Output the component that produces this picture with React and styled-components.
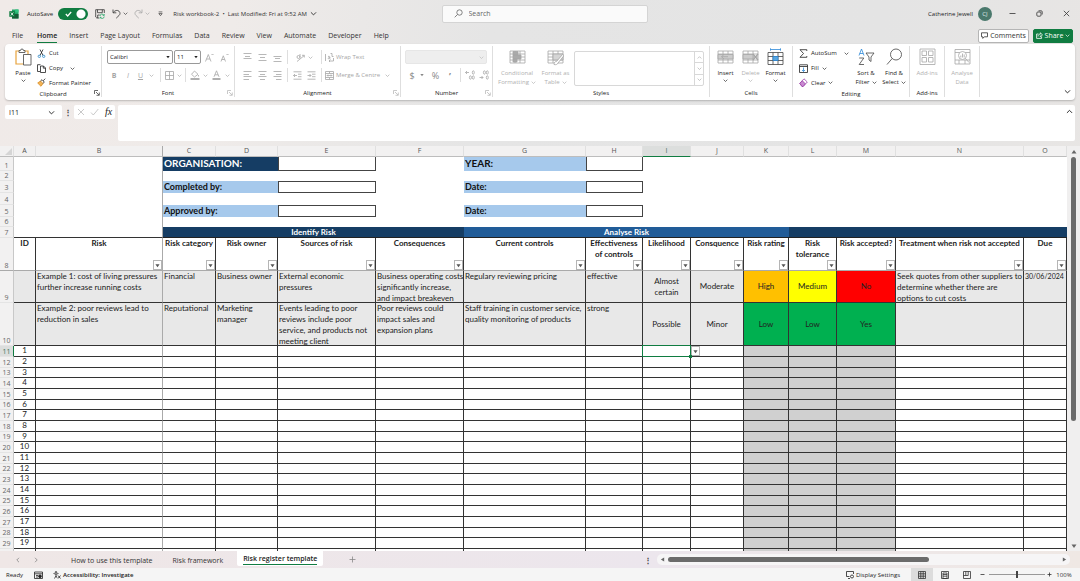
import styled, { createGlobalStyle, css } from "styled-components";

const GlobalStyle = createGlobalStyle`
  * {
    box-sizing: border-box;
  }

  body {
    margin: 0;
    font-family: "Open Sans", "Noto Sans", sans-serif;
    font-size: 6px;
    color: #222;
    overflow: hidden;
  }

  button, input, select {
    font: inherit;
    color: inherit;
    margin: 0;
    padding: 0;
    border: 0;
    background: none;
    outline: none;
  }
`;

const Window = styled.div`
  display: flex;
  flex-direction: column;
  height: 100vh;
  background: linear-gradient(100deg, #f0eae8 0%, #efebe9 20%, #e5e5e5 42%, #e4e4e4 75%, #e9e6e4 100%);
`;

const Icon = styled.svg`
  display: block;
  flex: none;
  fill: none;
  stroke: currentColor;
  stroke-width: 0.8;
`;

/* Title bar */

const TitleBar = styled.header`
  display: grid;
  grid-template-columns: 1fr 206px 1fr;
  align-items: center;
  height: 27px;
  padding-left: 9px;
`;

const TitleLeft = styled.div`
  display: flex;
  align-items: center;
  white-space: nowrap;
`;

const AutoSave = styled.label`
  display: flex;
  align-items: center;
  gap: 5px;
  margin: 0 7px 0 8px;
`;

const Toggle = styled.input`
  appearance: none;
  width: 30px;
  height: 12px;
  border-radius: 6px;
  background: radial-gradient(circle at 23px 6px, #fff 4px, transparent 5px), #107c41;
`;

const ToggleWrap = styled.span`
  position: relative;
  display: flex;

  svg {
    position: absolute;
    left: 7px;
    top: 3px;
    color: #fff;
  }
`;

const PlainButton = styled.button`
  display: flex;
  align-items: center;
  justify-content: center;
  gap: ${(p) => p.$gap || 0}px;
  width: ${(p) => (p.$w ? `${p.$w}px` : "auto")};
  height: 14px;
  flex: none;
  white-space: nowrap;
  color: ${(p) => (p.$dim ? "#a6a6a6" : "#333")};
`;

const DocTitle = styled(PlainButton)`
  margin-left: 3px;
`;

const SearchBox = styled.label`
  display: flex;
  align-items: center;
  gap: 6px;
  height: 18px;
  padding-left: 11px;
  border: 1px solid #d4d4d4;
  border-radius: 2px;
  background: #fafafa;
  color: #666;
`;

const SearchInput = styled.input`
  width: 100%;
  font-size: 7px;

  &::placeholder {
    color: #666;
    opacity: 1;
  }
`;

const TitleRight = styled.div`
  display: flex;
  align-items: center;
  justify-content: flex-end;
`;

const Avatar = styled.span`
  display: flex;
  align-items: center;
  justify-content: center;
  width: 14px;
  height: 14px;
  margin: 0 7px 0 5px;
  border-radius: 50%;
  background: #4a786c;
  color: #dfe9e6;
`;

/* Ribbon tabs */

const MenuBar = styled.nav`
  display: flex;
  align-items: center;
  height: 17px;
  padding: 0 7px 0 6px;
  font-size: 7px;
`;

const MenuTab = styled.button`
  height: 15px;
  margin: 0 6px;
  color: #333;
  white-space: nowrap;
  border-bottom: 1px solid transparent;

  &:first-child {
    margin-right: 8px;
  }

  ${(p) =>
    p.$active &&
    css`
      font-weight: 600;
      color: #222;
      border-color: #107c41;
    `}
`;

const MenuAction = styled.button`
  display: flex;
  align-items: center;
  justify-content: center;
  gap: 2px;
  width: ${(p) => p.$w}px;
  height: 14px;
  margin-left: ${(p) => (p.$primary ? 4 : 0)}px;
  border: 1px solid ${(p) => (p.$primary ? "#107c41" : "#b5b5b5")};
  border-radius: 2px;
  background: ${(p) => (p.$primary ? "#107c41" : "#fff")};
  color: ${(p) => (p.$primary ? "#fff" : "#333")};
`;

const Spacer = styled.span`
  flex: 1;
`;

/* Ribbon */

const Ribbon = styled.section`
  display: flex;
  flex: none;
  height: 56px;
  margin: 0 5px;
  border-radius: 4px;
  background: #fff;
  box-shadow: 0 1px 2px rgba(0, 0, 0, 0.22);
`;

const RibbonGroup = styled.div`
  position: relative;
  display: flex;
  flex-direction: column;
  flex: 0 0 ${(p) => p.$w}px;
  height: 51px;
  margin-top: 2px;
  border-right: 1px solid #dedede;
`;

const GroupBody = styled.div`
  display: flex;
  height: 44px;
  padding-left: ${(p) => p.$pad || 0}px;
`;

const GroupLabel = styled.div`
  line-height: 8px;
  text-align: center;
  color: #222;
`;

const Launcher = styled.button`
  position: absolute;
  right: 1px;
  bottom: 1px;
  color: ${(p) => (p.$dim ? "#bbb" : "#444")};
`;

const Stack = styled.div`
  display: flex;
  flex-direction: column;
`;

const ToolRow = styled.div`
  display: flex;
  align-items: center;
  height: ${(p) => p.$h || 18}px;
  white-space: nowrap;
`;

const Rule = styled.span`
  width: 1px;
  height: 14px;
  margin: 0 3px;
  background: #dedede;
`;

const BigButton = styled.button`
  display: flex;
  flex-direction: column;
  align-items: center;
  width: ${(p) => p.$w}px;
  height: 42px;
  padding-top: 2px;
  line-height: 9px;
  color: ${(p) => (p.$dim ? "#b0b0b0" : "#222")};

  & > svg:first-child {
    margin-bottom: 3px;
    color: ${(p) => (p.$dim || p.$soft ? "#a6a6a6" : "#444")};
  }
`;

const WithArrow = styled.span`
  display: flex;
  align-items: center;
  gap: 2px;
`;

const SmallButton = styled.button`
  display: flex;
  align-items: center;
  gap: 3px;
  height: 15px;
  color: #222;
  white-space: nowrap;
`;

const SplitArrow = styled.span`
  margin-left: 4px;
`;

const Picker = styled.span`
  display: flex;
  align-items: center;
  width: ${(p) => p.$w}px;
  height: 14px;
  padding: 0 2px;
  margin-right: 1px;
  border: 1px solid ${(p) => (p.$dim ? "#e6e6e6" : "#999")};
  border-radius: 2px;
  background: ${(p) => (p.$dim ? "#eee" : "#fff")};
  color: ${(p) => (p.$dim ? "#bbb" : "#222")};

  select {
    appearance: none;
    flex: 1;
    min-width: 0;
  }
`;

const Gallery = styled.div`
  display: flex;
  width: 130px;
  height: 35px;
  margin-top: 5px;
  border: 1px solid #d8d8d8;
  border-radius: 2px;
`;

const GalleryScroll = styled.div`
  display: flex;
  flex-direction: column;
  width: 9px;
  margin-left: auto;
  border-left: 1px solid #d8d8d8;

  button {
    display: flex;
    flex: 1;
    align-items: center;
    justify-content: center;
    color: #aaa;
  }

  button + button {
    border-top: 1px solid #d8d8d8;
  }
`;

const Collapse = styled.button`
  align-self: flex-end;
  margin: 0 4px 5px auto;
`;

/* Formula bar */

const FormulaBar = styled.div`
  display: flex;
  flex: none;
  height: 36px;
  margin: 5px 5px;
`;

const NameBox = styled.label`
  display: flex;
  align-items: center;
  width: 57px;
  height: 14px;
  padding: 0 7px 0 4px;
  border-radius: 2px;
  background: #fff;

  input {
    flex: 1;
    min-width: 0;
    font-size: 7px;
  }
`;

const Dots = styled.span`
  width: 12px;
  font-size: 8px;
  font-weight: 700;
  line-height: 14px;
  text-align: center;
  color: #444;
`;

const FxBox = styled.div`
  display: flex;
  align-items: center;
  justify-content: space-around;
  width: 41px;
  height: 14px;
  margin-right: 3px;
  border-radius: 2px;
  background: #fff;
  color: #bbb;
`;

const Fx = styled.button`
  font-family: "Liberation Serif", serif;
  font-size: 10px;
  font-style: italic;
  line-height: 12px;
  color: #222;
`;

const FormulaField = styled.div`
  display: flex;
  flex: 1;
  align-items: flex-start;
  padding: 3px 2px;
  border-radius: 2px;
  background: #fff;

  input {
    flex: 1;
  }
`;

/* Sheet */

const SheetArea = styled.main`
  display: flex;
  flex: 1;
  min-height: 0;
  overflow: hidden;
  background: #f0efef;
`;

const SheetView = styled.div`
  flex: 1;
  min-width: 0;
  overflow: hidden;
  background: #fff;
`;

const Sheet = styled.table`
  width: 100%;
  table-layout: fixed;
  border-collapse: separate;
  border-spacing: 0;
  font-family: Lato, "Liberation Sans", sans-serif;
  font-size: 8px;
  line-height: 11px;
  color: #222;
`;

const ColHead = styled.th`
  height: 11px;
  padding: 0;
  border-right: 1px solid ${(p) => (p.$freeze ? "#aaa" : "#e0e0e0")};
  border-bottom: 1px solid ${(p) => (p.$selected ? "#107c41" : "#bdbdbd")};
  background: ${(p) => (p.$selected ? "#dcdedd" : "#f2f1f1")};
  color: ${(p) => (p.$selected ? "#3d7358" : "#555")};
  font-family: "Open Sans", sans-serif;
  font-size: 7px;
  font-weight: 400;
  line-height: 10px;
`;

const RowHead = styled.th`
  padding: 0;
  border-right: 1px solid ${(p) => (p.$selected ? "#107c41" : "#c8c8c8")};
  border-bottom: 1px solid ${(p) => (p.$freeze ? "#aaa" : "#e4e4e4")};
  background: ${(p) => (p.$selected ? "#dcdedd" : "#f2f1f1")};
  color: ${(p) => (p.$selected ? "#3d7358" : "#666")};
  font-family: "Open Sans", sans-serif;
  font-size: 7px;
  font-weight: 400;
  line-height: 9px;
  vertical-align: bottom;
`;

const Row = styled.tr`
  height: ${(p) => p.$h}px;
`;

const Blank = styled.td`
  padding: 0;
  line-height: 0;
  border-right: ${(p) => (p.$freeze ? "1px solid #aaa" : "0")};
  border-bottom: ${(p) => (p.$ruled ? "1px solid #333" : "0")};
`;

const TitleCell = styled.td`
  padding: 0 1px;
  background: ${(p) => (p.$navy ? "#153d64" : "#a6c9ec")};
  color: ${(p) => (p.$navy ? "#fff" : "#111")};
  font-size: ${(p) => (p.$large ? 10 : 9)}px;
  font-weight: 700;
  line-height: 12px;
  white-space: nowrap;

  label {
    display: block;
    height: ${(p) => (p.$large ? 14 : 12)}px;
  }
`;

const EntryCell = styled.td`
  padding: 0;
  line-height: 0;

  input {
    display: block;
    width: 100%;
    height: ${(p) => p.$h}px;
    border: 1px solid #444;
    border-top-width: ${(p) => (p.$open ? 0 : 1)}px;
    font-size: 8px;
  }
`;

const Band = styled.th`
  padding: 0;
  background: ${(p) => (p.$blue ? "#215c98" : "#153d64")};
  color: #fff;
  font-weight: 700;
  line-height: 10px;
  border-bottom: 1px solid #222;
`;

const HeadCell = styled.th`
  position: relative;
  padding: 0;
  border-right: 1px solid ${(p) => (p.$freeze ? "#aaa" : "#333")};
  border-bottom: 1px solid #aaa;
  vertical-align: top;
  font-weight: 700;
  white-space: pre;
`;

const DropButton = styled.button`
  position: absolute;
  right: 0;
  bottom: 0;
  display: flex;
  align-items: center;
  justify-content: center;
  width: 9px;
  height: 10px;
  border: 1px solid #b5b5b5;
  background: #fff;
  color: #555;
`;

const Cell = styled.td`
  position: relative;
  padding: 0 1px;
  border-right: 1px solid ${(p) => (p.$freeze ? "#aaa" : "#333")};
  border-bottom: 1px solid #333;
  background: ${(p) => p.$bg || "#fff"};
  text-align: ${(p) => (p.$center ? "center" : "left")};
  vertical-align: ${(p) => (p.$center ? "middle" : "top")};
  white-space: pre;
`;

const CellText = styled.div`
  max-height: ${(p) => p.$max}px;
  font-size: ${(p) => (p.$date ? 7 : 8)}px;
`;

const IdCell = styled(Cell)`
  padding: 0;
  line-height: 9px;
  text-align: center;
`;

const Cursor = styled.div`
  position: absolute;
  inset: -1px;
  z-index: 1;
  border: 1px solid #107c41;

  &::after {
    content: "";
    position: absolute;
    right: -2px;
    bottom: -2px;
    width: 3px;
    height: 3px;
    background: #107c41;
  }

  button {
    right: -10px;
  }
`;

const VScroll = styled.div`
  display: flex;
  flex-direction: column;
  align-items: center;
  width: 13px;
  padding: 3px 0 2px;
  color: #666;
`;

const VThumb = styled.div`
  width: 5px;
  flex: 0 0 66%;
  margin: 2px 0 auto;
  border-radius: 3px;
  background: #6b6b6b;
`;

/* Sheet tabs */

const TabStrip = styled.div`
  display: flex;
  align-items: center;
  flex: none;
  height: 17px;
  padding: 0 10px 0 12px;
  background: linear-gradient(90deg, #efe7e6, #ece6ed 60%, #efe8e4);
  color: #777;
`;

const TabList = styled.div`
  display: flex;
  align-self: flex-start;
  margin-left: 13px;
`;

const SheetTab = styled.button`
  height: 15px;
  padding: 0 6px;
  margin: 0 4px;
  border-radius: 0 0 2px 2px;
  background: ${(p) => (p.$active ? "#fff" : "none")};
  color: ${(p) => (p.$active ? "#222" : "#333")};
  font-size: 7px;
  font-weight: ${(p) => (p.$active ? 600 : 400)};
  white-space: nowrap;

  span {
    display: block;
    padding-top: ${(p) => (p.$active ? 0 : 3)}px;
    line-height: 11px;
    border-bottom: ${(p) => (p.$active ? "1px solid #107c41" : "0")};
  }
`;

const HScroll = styled.div`
  display: flex;
  align-items: center;
  gap: 3px;
  flex: 0 0 39%;
  height: 11px;
  padding: 0 3px;
  margin-left: 3px;
  border-radius: 5px;
  background: #f6f5f6;
  color: #666;
`;

const HThumb = styled.div`
  width: 64%;
  height: 5px;
  margin-right: auto;
  border-radius: 3px;
  background: #6b6b6b;
`;

/* Status bar */

const StatusBar = styled.footer`
  display: flex;
  align-items: center;
  flex: none;
  height: 13px;
  padding: 0 4px 0 6px;
  background: #f5f5f5;
`;

const StatusItem = styled.span`
  display: flex;
  align-items: center;
  gap: 2px;
  margin-right: ${(p) => p.$after || 0}px;
  font-weight: ${(p) => (p.$strong ? 600 : 400)};
  white-space: nowrap;
`;

const ViewButton = styled(PlainButton)`
  height: 13px;
  background: ${(p) => (p.$active ? "#dcdcdc" : "none")};
`;

const ZoomSlider = styled.input`
  appearance: none;
  width: 56px;
  height: 8px;
  margin: 0 2px;
  background: linear-gradient(#999, #999) center / 100% 1px no-repeat;

  &::-webkit-slider-thumb {
    appearance: none;
    width: 2px;
    height: 7px;
    background: #444;
  }
`;

const Chevron = ({ up, big }) => (
  <Icon width={big ? 7 : 5} height={big ? 7 : 5} viewBox="0 0 6 6">
    <path d={up ? "M.8 4.2 3 2l2.2 2.2" : "M.8 2 3 4.2 5.2 2"} />
  </Icon>
);

const Triangle = ({ d, size = 5 }) => (
  <Icon width={size} height={size} viewBox="0 0 6 6">
    <path d={d} fill="currentColor" stroke="none" />
  </Icon>
);

const DOWN = "M.5 1.5h5L3 5z";

const LauncherIcon = () => (
  <Icon width="6" height="6" viewBox="0 0 6 6">
    <path d="M.5 4V.5H4M2 2l3 3M5.3 2.5v2.8H2.5" />
  </Icon>
);

const Lines = ({ rows }) => (
  <Icon width="9" height="9" viewBox="0 0 9 9">
    {rows.map(([y, a, b]) => (
      <path key={y} d={`M${a} ${y}H${b}`} />
    ))}
  </Icon>
);

const topLines = [[0.5, 0.5, 8.5], [3.5, 2, 7], [5.5, 0.5, 8.5]];
const midLines = [[1.5, 0.5, 8.5], [4.5, 2, 7], [7.5, 0.5, 8.5]];
const lowLines = [[3.5, 0.5, 8.5], [5.5, 2, 7], [8.5, 0.5, 8.5]];
const leftLines = [[0.5, 0.5, 8.5], [3.5, 0.5, 6], [5.5, 0.5, 8.5], [8.5, 0.5, 6]];
const centerLines = [[0.5, 0.5, 8.5], [3.5, 2, 7], [5.5, 0.5, 8.5], [8.5, 2, 7]];
const rightLines = [[0.5, 0.5, 8.5], [3.5, 3, 8.5], [5.5, 0.5, 8.5], [8.5, 3, 8.5]];

const Indent = ({ flip }) => (
  <Icon width="9" height="9" viewBox="0 0 9 9">
    <path d="M.5.8h8M5 3.2h3.5M5 5.7h3.5M.5 8.2h8" />
    <path d={flip ? "M.5 4.5h3.5M2.500 3 4 4.500 2.500 6" : "M4 4.500H.500M2 3 .500 4.500 2 6"} />
  </Icon>
);

const TableIcon = ({ children }) => (
  <Icon width="17" height="18" viewBox="0 0 17 15">
    <path d="M1 1.500h15v12H1zM1 4.500h15M1 7.500h15M1 10.500h15M6 1.500v12M11 1.500v12" />
    {children}
  </Icon>
);

const columns = [
  ["A", 22], ["B", 127], ["C", 53], ["D", 62], ["E", 98], ["F", 88], ["G", 122], ["H", 57],
  ["I", 48], ["J", 53], ["K", 45], ["L", 48], ["M", 59], ["N", 128], ["O", 0],
];

const headings = [
  "ID", "Risk", "Risk category", "Risk owner", "Sources of risk", "Consequences",
  "Current controls", "Effectiveness\nof controls", "Likelihood", "Consquence",
  "Risk rating", "Risk\ntolerance", "Risk accepted?", "Treatment when risk not accepted", "Due",
];

const GREY = "#e8e8e8";
const GREEN = "#00b050";

const examples = [
  {
    n: 9,
    h: 32,
    cells: [
      "", "Example 1: cost of living pressures\nfurther increase running costs", "Financial",
      "Business owner", "External economic\npressures",
      "Business operating costs\nsignificantly increase,\nand impact breakeven",
      "Regulary reviewing pricing", "effective", "Almost\ncertain", "Moderate", "High", "Medium",
      "No", "Seek quotes from other suppliers to\ndetermine whether there are\noptions to cut costs",
      "30/06/2024",
    ],
    fills: { 10: "#ffc000", 11: "#ffff00", 12: "#ff0000" },
  },
  {
    n: 10,
    h: 43,
    cells: [
      "", "Example 2: poor reviews lead to\nreduction in sales", "Reputational",
      "Marketing\nmanager",
      "Events leading to poor\nreviews include poor\nservice, and products not\nmeeting client",
      "Poor reviews could\nimpact sales and\nexpansion plans",
      "Staff training in customer service,\nquality monitoring of products", "strong", "Possible",
      "Minor", "Low", "Low", "Yes", "", "",
    ],
    fills: { 10: GREEN, 11: GREEN, 12: GREEN },
  },
];

const entryRows = Array.from({ length: 20 }, (_, i) => i + 1);

function FormRow({ n, h, left, right }) {
  const large = n === 1;
  return (
    <Row $h={h}>
      <RowHead>{n}</RowHead>
      <Blank colSpan={2} $freeze />
      <TitleCell colSpan={2} $navy={large} $large={large}>
        <label htmlFor={`left-${n}`}>{left}</label>
      </TitleCell>
      <EntryCell $h={h} $open={large}><input id={`left-${n}`} /></EntryCell>
      <Blank />
      <TitleCell $large={large}>
        <label htmlFor={`right-${n}`}>{right}</label>
      </TitleCell>
      <EntryCell $h={h} $open={large}><input id={`right-${n}`} /></EntryCell>
      <Blank colSpan={7} />
    </Row>
  );
}

function GapRow({ n, h }) {
  return (
    <Row $h={h}>
      <RowHead>{n}</RowHead>
      <Blank colSpan={2} $freeze />
      <Blank colSpan={13} />
    </Row>
  );
}

function RiskSheet() {
  return (
    <Sheet>
      <colgroup>
        <col style={{ width: 14 }} />
        {columns.map(([name, width]) => (
          <col key={name} style={width ? { width } : undefined} />
        ))}
      </colgroup>
      <thead>
        <tr>
          <ColHead>
            <Icon width="13" height="10" viewBox="0 0 13 10">
              <path d="M12 2v7H5z" fill="#d5d5d5" stroke="none" />
            </Icon>
          </ColHead>
          {columns.map(([name]) => (
            <ColHead key={name} $selected={name === "I"} $freeze={name === "B"}>{name}</ColHead>
          ))}
        </tr>
      </thead>
      <tbody>
        <FormRow n={1} h={14} left="ORGANISATION:" right="YEAR:" />
        <GapRow n={2} h={10} />
        <FormRow n={3} h={12} left="Completed by:" right="Date:" />
        <GapRow n={4} h={12} />
        <FormRow n={5} h={12} left="Approved by:" right="Date:" />
        <GapRow n={6} h={10} />
        <Row $h={11}>
          <RowHead>7</RowHead>
          <Blank colSpan={2} $freeze $ruled />
          <Band colSpan={4}>Identify Risk</Band>
          <Band colSpan={5} $blue>Analyse Risk</Band>
          <Band colSpan={4} />
        </Row>
        <Row $h={33}>
          <RowHead $freeze>8</RowHead>
          {headings.map((text, i) => (
            <HeadCell key={text} $freeze={i === 1}>
              {text}
              {i > 0 && (
                <DropButton aria-label={`Filter ${text}`}>
                  <Triangle d={DOWN} />
                </DropButton>
              )}
            </HeadCell>
          ))}
        </Row>
        {examples.map((row) => (
          <Row key={row.n} $h={row.h}>
            <RowHead>{row.n}</RowHead>
            {row.cells.map((text, i) => (
              <Cell key={i} $freeze={i === 1} $bg={row.fills[i] || GREY} $center={i > 7 && i < 13}>
                <CellText $max={row.h - 1} $date={i === 14}>{text}</CellText>
              </Cell>
            ))}
          </Row>
        ))}
        {entryRows.map((id) => (
          <Row key={id} $h={id % 3 === 0 ? 10 : 11}>
            <RowHead $selected={id === 1}>{id < 20 && id + 10}</RowHead>
            <IdCell>{id < 20 && id}</IdCell>
            {columns.slice(1).map(([name], i) => (
              <Cell key={name} $freeze={i === 0} $bg={i > 8 && i < 12 ? "#d0d0d0" : "#fff"}>
                {id === 1 && name === "I" && (
                  <Cursor>
                    <DropButton aria-label="Choose likelihood">
                      <Triangle d={DOWN} />
                    </DropButton>
                  </Cursor>
                )}
              </Cell>
            ))}
          </Row>
        ))}
      </tbody>
    </Sheet>
  );
}

function TopBar() {
  return (
    <TitleBar>
      <TitleLeft>
        <Icon width="10" height="10" viewBox="0 0 10 10">
          <path d="M3 .5h6.500v9H3z" fill="#21a366" stroke="none" />
          <path d="M6.200.5h3.300v3H6.200z" fill="#33c481" stroke="none" />
          <path d="M3 5h6.500v4.500H3z" fill="#185c37" stroke="none" />
          <path d="M.3 2.200h5.500v5.600H.3z" fill="#107c41" stroke="none" />
          <path d="m1.800 3.500 2.500 3m0-3-2.500 3" stroke="#fff" />
        </Icon>
        <AutoSave>
          AutoSave
          <ToggleWrap>
            <Toggle type="checkbox" defaultChecked />
            <Icon width="7" height="6" viewBox="0 0 7 6">
              <path d="M.8 3 2.700 5 6.200 1" strokeWidth="1.200" />
            </Icon>
          </ToggleWrap>
        </AutoSave>
        <PlainButton $w={10} aria-label="Save">
          <Icon width="10" height="10" viewBox="0 0 10 10">
            <path d="M4 9H1.800L.7 8V.7h8.600V4M2.500.7v3h4.800v-3M2.700 9V6h2" />
            <path d="M5 7a2 2 0 0 1 3.800-.8M9.200 5v1.400H7.700M9.200 7.500a2 2 0 0 1-3.800.8M5 9.700V8.300h1.400" stroke="#21a366" />
          </Icon>
        </PlainButton>
        <PlainButton $w={29} $gap={2} aria-label="Undo">
          <Icon width="9" height="10" viewBox="0 0 9 10">
            <path d="M1 .5v3.300h3.300M1.200 3.600C3 1.200 5.400.8 7 2.200c1.500 1.500 1.200 3.200 0 4.300L4.200 9.200" />
          </Icon>
          <Chevron />
        </PlainButton>
        <PlainButton $w={16} $gap={2} $dim aria-label="Redo">
          <Icon width="9" height="10" viewBox="0 0 9 10">
            <path d="M8 .5v3.300H4.700M7.800 3.600C6 1.200 3.600.8 2 2.200c-1.500 1.500-1.200 3.200 0 4.300l2.800 2.700" />
          </Icon>
          <Chevron />
        </PlainButton>
        <PlainButton $w={20} aria-label="Customise toolbar">
          <Icon width="5" height="6" viewBox="0 0 6 7">
            <path d="M.8 1h4.400M1 3h4L3 5.500z" />
          </Icon>
        </PlainButton>
        <DocTitle $gap={3}>
          Risk workbook-2 &nbsp;•&nbsp; Last Modified: Fri at 9:52 AM
          <Chevron big />
        </DocTitle>
      </TitleLeft>
      <SearchBox>
        <Icon width="9" height="9" viewBox="0 0 9 9">
          <circle cx="5.500" cy="3.500" r="2.700" />
          <path d="M3.500 5.500.7 8.300" />
        </Icon>
        <SearchInput placeholder="Search" aria-label="Search" />
      </SearchBox>
      <TitleRight>
        Catherine Jewell
        <Avatar>CJ</Avatar>
        <PlainButton $w={27} aria-label="Minimise">
          <Icon width="7" height="7" viewBox="0 0 7 7"><path d="M.5 3.500h6" /></Icon>
        </PlainButton>
        <PlainButton $w={27} aria-label="Restore">
          <Icon width="7" height="7" viewBox="0 0 7 7">
            <rect x=".8" y="2" width="4.200" height="4.200" rx="1" />
            <path d="M2.500.8h2.700a1 1 0 0 1 1 1v2.700" />
          </Icon>
        </PlainButton>
        <PlainButton $w={27} aria-label="Close">
          <Icon width="7" height="7" viewBox="0 0 7 7"><path d="m.8.8 5.400 5.400m0-5.400L.8 6.200" /></Icon>
        </PlainButton>
      </TitleRight>
    </TitleBar>
  );
}

const menuTabs = [
  "File", "Home", "Insert", "Page Layout", "Formulas", "Data",
  "Review", "View", "Automate", "Developer", "Help",
];

function Menu() {
  return (
    <MenuBar>
      {menuTabs.map((name) => (
        <MenuTab key={name} $active={name === "Home"}>{name}</MenuTab>
      ))}
      <Spacer />
      <MenuAction $w={51}>
        <Icon width="7" height="7" viewBox="0 0 7 7">
          <path d="M.5.8h6v4H3.300L1.800 6.400V4.800H.5z" />
        </Icon>
        Comments
      </MenuAction>
      <MenuAction $w={40} $primary>
        <Icon width="7" height="7" viewBox="0 0 7 7">
          <path d="M2.500 2H.6v4.400h5V4.500M2 4.500C2 3 3 2.200 4.300 2.200V.8l2.200 2.100-2.200 2V3.500" />
        </Icon>
        Share
        <Chevron />
      </MenuAction>
    </MenuBar>
  );
}

function ClipboardGroup() {
  return (
    <RibbonGroup $w={97}>
      <GroupBody $pad={4}>
        <BigButton $w={28}>
          <Icon width="17" height="18" viewBox="0 0 17 18">
            <path d="M4 3H1v13h7M10 3h3v3" stroke="#e8a33d" strokeWidth="1.200" />
            <path d="M4 4.500V2.500h1.500a1.500 1.500 0 0 1 3 0H10v2z" />
            <path d="M8.500 6.500H16v10.500H8.500z" fill="#fff" />
          </Icon>
          Paste
          <Chevron />
        </BigButton>
        <Stack>
          <SmallButton>
            <Icon width="9" height="9" viewBox="0 0 9 9">
              <path d="m3 .5 3 6M6 .5l-3 6" />
              <circle cx="2.300" cy="7.300" r="1.200" stroke="#2b88c8" />
              <circle cx="6.700" cy="7.300" r="1.200" stroke="#2b88c8" />
            </Icon>
            Cut
          </SmallButton>
          <SmallButton>
            <Icon width="9" height="9" viewBox="0 0 9 9">
              <path d="M3 7.500H.5V.7H3.500M3.500 2h3l2 2v4.500h-5zM6.300 2v2.200h2.200" />
            </Icon>
            Copy
            <SplitArrow><Chevron /></SplitArrow>
          </SmallButton>
          <SmallButton>
            <Icon width="9" height="9" viewBox="0 0 9 9">
              <path d="M3.500 3 6 5.500l-2 2.800L.7 5z" fill="#f2b457" stroke="#d98b1f" />
              <path d="M3.500 3 5 1.700 7.300 4 6 5.500M6.200 2.700 8.300.7" />
            </Icon>
            Format Painter
          </SmallButton>
        </Stack>
      </GroupBody>
      <GroupLabel>Clipboard</GroupLabel>
      <Launcher aria-label="Clipboard options"><LauncherIcon /></Launcher>
    </RibbonGroup>
  );
}

function FontGroup() {
  return (
    <RibbonGroup $w={133}>
      <GroupBody $pad={5}>
        <Stack>
          <ToolRow $h={22}>
            <Picker $w={66}>
              <select aria-label="Font"><option>Calibri</option></select>
              <Triangle d={DOWN} size={4} />
            </Picker>
            <Picker $w={27}>
              <select aria-label="Font size"><option>11</option></select>
              <Triangle d={DOWN} size={4} />
            </Picker>
            <PlainButton $w={15} $dim aria-label="Grow font">
              <Icon width="9" height="9" viewBox="0 0 9 9">
                <path d="M.5 8.500 3.300 1.500 6 8.500M1.500 6H5M6.500 2 7.500 1l1 1" />
              </Icon>
            </PlainButton>
            <PlainButton $w={15} $dim aria-label="Shrink font">
              <Icon width="9" height="9" viewBox="0 0 9 9">
                <path d="M1 8.500 3.300 2.800 5.500 8.500M1.700 6.500h3M6.500 1l1 1 1-1" />
              </Icon>
            </PlainButton>
          </ToolRow>
          <ToolRow $h={14}>
            <Letter $w={14} $dim><b>B</b></Letter>
            <Letter $w={14} $dim><i>I</i></Letter>
            <Letter $w={22} $gap={6} $dim><u>U</u><Chevron /></Letter>
            <Rule />
            <PlainButton $w={18} $gap={3} $dim aria-label="Borders">
              <Icon width="9" height="9" viewBox="0 0 9 9"><path d="M.5.5h8v8h-8zM4.500.5v8M.5 4.500h8" /></Icon>
              <Chevron />
            </PlainButton>
            <Rule />
            <PlainButton $w={20} $gap={3} $dim aria-label="Fill colour">
              <Icon width="10" height="10" viewBox="0 0 10 10">
                <path d="M4.500 1 8 4.300 4.500 7 1.500 4.300zM8.500 5v1.500" />
                <path d="M.5 9h9" strokeWidth="1.800" />
              </Icon>
              <Chevron />
            </PlainButton>
            <PlainButton $w={24} $gap={4} $dim aria-label="Font colour">
              <Icon width="9" height="10" viewBox="0 0 9 10">
                <path d="M2 6.800 4.500.8 7 6.800M3 4.800h3" />
                <path d="M.5 9h8" strokeWidth="1.800" />
              </Icon>
              <Chevron />
            </PlainButton>
          </ToolRow>
        </Stack>
      </GroupBody>
      <GroupLabel>Font</GroupLabel>
      <Launcher $dim aria-label="Font options"><LauncherIcon /></Launcher>
    </RibbonGroup>
  );
}

function AlignmentGroup() {
  return (
    <RibbonGroup $w={166}>
      <GroupBody $pad={5}>
        <Stack>
          <ToolRow $h={22}>
            <PlainButton $w={15} $dim aria-label="Top"><Lines rows={topLines} /></PlainButton>
            <PlainButton $w={15} $dim aria-label="Middle"><Lines rows={midLines} /></PlainButton>
            <PlainButton $w={14} $dim aria-label="Bottom"><Lines rows={lowLines} /></PlainButton>
            <Rule />
            <PlainButton $w={27} $gap={3} $dim aria-label="Orientation">
              <Icon width="9" height="9" viewBox="0 0 9 9">
                <path d="M1 8.500 8.300 2.500M6 2.300h2.300v2.200" />
                <circle cx="2.500" cy="4" r="1.500" />
                <path d="M4 1v3.500" />
              </Icon>
              <Chevron />
            </PlainButton>
            <Rule />
            <PlainButton $gap={2} $dim>
              <Icon width="9" height="9" viewBox="0 0 9 9">
                <path d="M.5 1v7M3 3.500c2-1 2 1 2 2M5 4.500c-2.500 0-2.500 2 0 1M5.500.5h1.500v3h1.500M8.500 5v3H4M5.500 6.500 4 8l1 1" />
              </Icon>
              Wrap Text
            </PlainButton>
          </ToolRow>
          <ToolRow $h={14}>
            <PlainButton $w={15} $dim aria-label="Left"><Lines rows={leftLines} /></PlainButton>
            <PlainButton $w={15} $dim aria-label="Centre"><Lines rows={centerLines} /></PlainButton>
            <PlainButton $w={14} $dim aria-label="Right"><Lines rows={rightLines} /></PlainButton>
            <Rule />
            <PlainButton $w={13} $dim aria-label="Decrease indent"><Indent /></PlainButton>
            <PlainButton $w={14} $dim aria-label="Increase indent"><Indent flip /></PlainButton>
            <Rule />
            <PlainButton $gap={2} $dim>
              <Icon width="9" height="9" viewBox="0 0 9 9">
                <path d="M.5.5h8v8h-8zM.5 2.500h8M.5 6.500h8M4.500.5v2M4.500 6.500v2M2 4.500h5M3 3.500l-1 1 1 1M6 3.500l1 1-1 1" />
              </Icon>
              Merge &amp; Centre
            </PlainButton>
            <PlainButton $w={15} $dim aria-label="Merge options"><Chevron /></PlainButton>
          </ToolRow>
        </Stack>
      </GroupBody>
      <GroupLabel>Alignment</GroupLabel>
      <Launcher $dim aria-label="Alignment options"><LauncherIcon /></Launcher>
    </RibbonGroup>
  );
}

const Decimal = ({ flip }) => (
  <Icon width="10" height="10" viewBox="0 0 10 10">
    <path d={flip ? "M.5 7.500H4M2.500 6 4 7.500 2.500 9" : "M4 2.500H.5M2 1 .5 2.500 2 4"} />
    <ellipse cx="8.300" cy="2.500" rx="1" ry="1.700" />
    <ellipse cx="8.300" cy="7.500" rx="1" ry="1.700" />
    <ellipse cx="5.400" cy={flip ? 2.5 : 7.5} rx="1" ry="1.700" />
  </Icon>
);

const Letter = styled(PlainButton)`
  font-size: 7px;
`;

const Symbol = styled(PlainButton)`
  font-size: 9px;
  color: #888;
`;

function NumberGroup() {
  return (
    <RibbonGroup $w={91}>
      <GroupBody $pad={4}>
        <Stack>
          <ToolRow $h={22}>
            <Picker $w={82} $dim>
              <select aria-label="Number format"><option></option></select>
              <Chevron />
            </Picker>
          </ToolRow>
          <ToolRow $h={14}>
            <Symbol $w={23} $gap={5}>$<Triangle d={DOWN} size={4} /></Symbol>
            <Symbol $w={15}>%</Symbol>
            <Symbol $w={14}><b>’</b></Symbol>
            <Rule />
            <PlainButton $w={12} $dim aria-label="Increase decimal"><Decimal /></PlainButton>
            <PlainButton $w={16} $dim aria-label="Decrease decimal"><Decimal flip /></PlainButton>
          </ToolRow>
        </Stack>
      </GroupBody>
      <GroupLabel>Number</GroupLabel>
      <Launcher $dim aria-label="Number options"><LauncherIcon /></Launcher>
    </RibbonGroup>
  );
}

function StylesGroup() {
  return (
    <RibbonGroup $w={217}>
      <GroupBody $pad={4}>
        <BigButton $w={40} $dim>
          <TableIcon>
            <path d="M4 2h5v3.500H4zM4 5.500h8v4H4zM4 9.500h4v3H4z" fill="#aaa" />
          </TableIcon>
          Conditional
          <WithArrow>Formatting <Chevron /></WithArrow>
        </BigButton>
        <BigButton $w={37} $dim>
          <TableIcon>
            <path d="M6 4.500h10v6H6z" fill="#d5d5d5" />
            <path d="M7 15c0-2 1-3 2.500-3L15.500 5l1.300 1.300L11 13.500C10.500 15 9 15.500 7 15z" fill="#fff" />
          </TableIcon>
          Format as
          <WithArrow>Table <Chevron /></WithArrow>
        </BigButton>
        <Gallery>
          <GalleryScroll>
            <button aria-label="Previous styles"><Chevron up /></button>
            <button aria-label="Next styles"><Chevron /></button>
            <button aria-label="More styles"><Chevron /></button>
          </GalleryScroll>
        </Gallery>
      </GroupBody>
      <GroupLabel>Styles</GroupLabel>
    </RibbonGroup>
  );
}

function CellsGroup() {
  return (
    <RibbonGroup $w={83}>
      <GroupBody $pad={3}>
        <BigButton $w={25} $soft>
          <TableIcon>
            <path d="M1 5h15v4.500H1z" fill="#ccc" />
            <path d="M11 7.200H4.500M7 5 4.500 7.200 7 9.500" />
          </TableIcon>
          Insert
          <Chevron />
        </BigButton>
        <BigButton $w={25} $dim>
          <TableIcon>
            <path d="M1 5h10v4.500H1z" fill="#ccc" />
            <path d="m11 4.500 5 6m0-6-5 6" strokeWidth="1.200" />
          </TableIcon>
          Delete
          <Chevron />
        </BigButton>
        <BigButton $w={25}>
          <Icon width="17" height="18" viewBox="0 0 17 18">
            <path d="M1 4.500h15v12H1zM1 8.500h15M1 12.500h15M6 4.500v12M11 4.500v12" />
            <path d="M6 8.500h5v4H6z" fill="#5aa7e0" stroke="#2b88d8" />
            <path d="M3.500 1.500h10M3.500.3v2.400M13.500.3v2.400" stroke="#2b88d8" />
          </Icon>
          Format
          <Chevron />
        </BigButton>
      </GroupBody>
      <GroupLabel>Cells</GroupLabel>
    </RibbonGroup>
  );
}

function EditingGroup() {
  return (
    <RibbonGroup $w={117}>
      <GroupBody $pad={6}>
        <Stack>
          <SmallButton>
            <Icon width="9" height="9" viewBox="0 0 9 9">
              <path d="M7.800 2V.7H1L4.500 4.500 1 8.300h6.800V7" />
            </Icon>
            AutoSum
            <SplitArrow><Chevron /></SplitArrow>
          </SmallButton>
          <SmallButton>
            <Icon width="9" height="9" viewBox="0 0 9 9">
              <path d="M.5.8h8v7.700h-8zM.5 2.500h8" />
              <path d="M4.500 3.500v4M3 6l1.500 1.500L6 6" stroke="#2b88d8" />
            </Icon>
            Fill <Chevron />
          </SmallButton>
          <SmallButton>
            <Icon width="9" height="9" viewBox="0 0 9 9">
              <path d="M.8 5.300 5 .8l3.300 3.200-4.200 4.500H3z" stroke="#9b3fa8" />
              <path d="m.8 5.300 2.500-2.500 3 3-2.200 2.700H3z" fill="#c98bd1" stroke="#9b3fa8" />
            </Icon>
            Clear <Chevron />
          </SmallButton>
        </Stack>
        <Spacer />
        <BigButton $w={26}>
          <Icon width="17" height="18" viewBox="0 0 17 18">
            <path d="M1 7.500 3.500 1 6 7.500M1.800 5.500h3.400" stroke="#2b88d8" />
            <path d="M1.200 10h4.600L1.200 16.500h4.800M8 5h8l-3 4v4.500l-2-1.500V9z" />
          </Icon>
          Sort &amp;
          <WithArrow>Filter <Chevron /></WithArrow>
        </BigButton>
        <BigButton $w={30}>
          <Icon width="17" height="18" viewBox="0 0 17 18">
            <circle cx="10" cy="6.500" r="5.500" />
            <path d="M6.200 10.500 1 16.500" />
          </Icon>
          Find &amp;
          <WithArrow>Select <Chevron /></WithArrow>
        </BigButton>
      </GroupBody>
      <GroupLabel>Editing</GroupLabel>
    </RibbonGroup>
  );
}

function AddInGroups() {
  return (
    <>
      <RibbonGroup $w={35}>
        <GroupBody>
          <BigButton $w={34} $dim>
            <Icon width="17" height="18" viewBox="0 0 17 18">
              <path d="M1 1h15v15.500H1z" />
              <path d="M3 3h4.500v4.500H3zM9.500 3H14v4.500H9.500zM3 9.500h4.500V14H3zM9.500 9.500H14V14H9.500z" />
            </Icon>
            Add-ins
          </BigButton>
        </GroupBody>
        <GroupLabel>Add-ins</GroupLabel>
      </RibbonGroup>
      <RibbonGroup $w={35}>
        <GroupBody>
          <BigButton $w={34} $dim>
            <Icon width="17" height="18" viewBox="0 0 17 18">
              <path d="M1 1.500h15v14.500H1zM1 4.500h15M1 12h15M5 12v4M11 12v4" />
              <circle cx="8.500" cy="7.500" r="4" fill="#fff" />
              <path d="M6.800 9.500V7.500M8.500 9.500V5.500M10.200 9.500V6.500M11.500 10.500l3.500 4" />
            </Icon>
            Analyse
            <span>Data</span>
          </BigButton>
        </GroupBody>
      </RibbonGroup>
    </>
  );
}

function Formula() {
  return (
    <FormulaBar>
      <NameBox>
        <input defaultValue="I11" aria-label="Name box" />
        <Chevron big />
      </NameBox>
      <Dots>⋮</Dots>
      <FxBox>
        <Icon width="8" height="8" viewBox="0 0 8 8"><path d="m1 1 6 6m0-6L1 7" /></Icon>
        <Icon width="9" height="8" viewBox="0 0 9 8"><path d="M1 4.500 3.300 7 8.300 1" /></Icon>
        <Fx>fx</Fx>
      </FxBox>
      <FormulaField>
        <input aria-label="Formula" />
        <Chevron up big />
      </FormulaField>
    </FormulaBar>
  );
}

function Tabs() {
  return (
    <TabStrip>
      <PlainButton $w={12} aria-label="Previous sheet">
        <Icon width="6" height="6" viewBox="0 0 6 6"><path d="M4 .8 1.800 3 4 5.200" stroke="#888" /></Icon>
      </PlainButton>
      <PlainButton $w={24} aria-label="Next sheet">
        <Icon width="6" height="6" viewBox="0 0 6 6"><path d="M2 .8 4.200 3 2 5.200" stroke="#888" /></Icon>
      </PlainButton>
      <TabList>
        <SheetTab><span>How to use this template</span></SheetTab>
        <SheetTab><span>Risk framework</span></SheetTab>
        <SheetTab $active><span>Risk register template</span></SheetTab>
      </TabList>
      <PlainButton $w={50} aria-label="New sheet">
        <Icon width="7" height="7" viewBox="0 0 7 7"><path d="M3.500.5v6M.5 3.500h6" stroke="#888" /></Icon>
      </PlainButton>
      <Spacer />
      <Dots>⋮</Dots>
      <HScroll>
        <Triangle d="M5 .5v5L1 3z" />
        <HThumb />
        <Triangle d="M1 .5v5L5 3z" />
      </HScroll>
    </TabStrip>
  );
}

function Status() {
  return (
    <StatusBar>
      <StatusItem $after={11}>Ready</StatusItem>
      <StatusItem $after={10}>
        <Icon width="9" height="8" viewBox="0 0 9 8">
          <path d="M.5 1h8v6.500h-8zM.5 2.800h8M2 4.500h2M2 6h2" />
          <circle cx="6" cy="5.300" r="1.400" fill="currentColor" />
        </Icon>
      </StatusItem>
      <StatusItem $strong>
        <Icon width="8" height="8" viewBox="0 0 8 8">
          <circle cx="3" cy="1.300" r=".8" />
          <path d="M.5 2.500 3 3.200l2.500-.7M3 3.200v1.600L1.500 7.500M3 4.800l1 2M5 4.500l2.500 3M7.500 4.500 5 7.500" />
        </Icon>
        Accessibility: Investigate
      </StatusItem>
      <Spacer />
      <StatusItem $after={11}>
        <Icon width="8" height="8" viewBox="0 0 8 8">
          <path d="M3.500 5.500H.5v-5h7V3M2 7.500h2" />
          <circle cx="6" cy="5.500" r="1.500" />
        </Icon>
        Display Settings
      </StatusItem>
      <ViewButton $w={22} $active aria-label="Normal">
        <Icon width="8" height="8" viewBox="0 0 8 8"><path d="M.5.5h7v7h-7zM2.800.5v7M5.200.5v7M.5 2.800h7M.5 5.200h7" /></Icon>
      </ViewButton>
      <ViewButton $w={23} aria-label="Page layout">
        <Icon width="8" height="8" viewBox="0 0 8 8"><path d="M.5.5h7v7h-7zM2 2h4v5.500H2zM2 3.500h4M2 5.200h4" /></Icon>
      </ViewButton>
      <ViewButton $w={22} aria-label="Page break preview">
        <Icon width="8" height="8" viewBox="0 0 8 8"><path d="M.5.5h7v7h-7zM2.800.5v4M5.200.5v4M.5 4.500h4.700" /></Icon>
      </ViewButton>
      <PlainButton $w={9} aria-label="Zoom out">
        <Icon width="5" height="5" viewBox="0 0 5 5"><path d="M.5 2.500h4" /></Icon>
      </PlainButton>
      <ZoomSlider type="range" defaultValue="50" aria-label="Zoom" />
      <PlainButton $w={5} aria-label="Zoom in">
        <Icon width="5" height="5" viewBox="0 0 5 5"><path d="M.5 2.500h4M2.500.5v4" /></Icon>
      </PlainButton>
      <PlainButton $w={24}>100%</PlainButton>
    </StatusBar>
  );
}

function App() {
  return (
    <Window>
      <GlobalStyle />
      <TopBar />
      <Menu />
      <Ribbon>
        <ClipboardGroup />
        <FontGroup />
        <AlignmentGroup />
        <NumberGroup />
        <StylesGroup />
        <CellsGroup />
        <EditingGroup />
        <AddInGroups />
        <Collapse aria-label="Collapse ribbon"><Chevron big /></Collapse>
      </Ribbon>
      <Formula />
      <SheetArea>
        <SheetView>
          <RiskSheet />
        </SheetView>
        <VScroll>
          <Triangle d="M.5 4.500h5L3 1z" size={6} />
          <VThumb />
          <Triangle d={DOWN} size={6} />
        </VScroll>
      </SheetArea>
      <Tabs />
      <Status />
    </Window>
  );
}

export default App;
